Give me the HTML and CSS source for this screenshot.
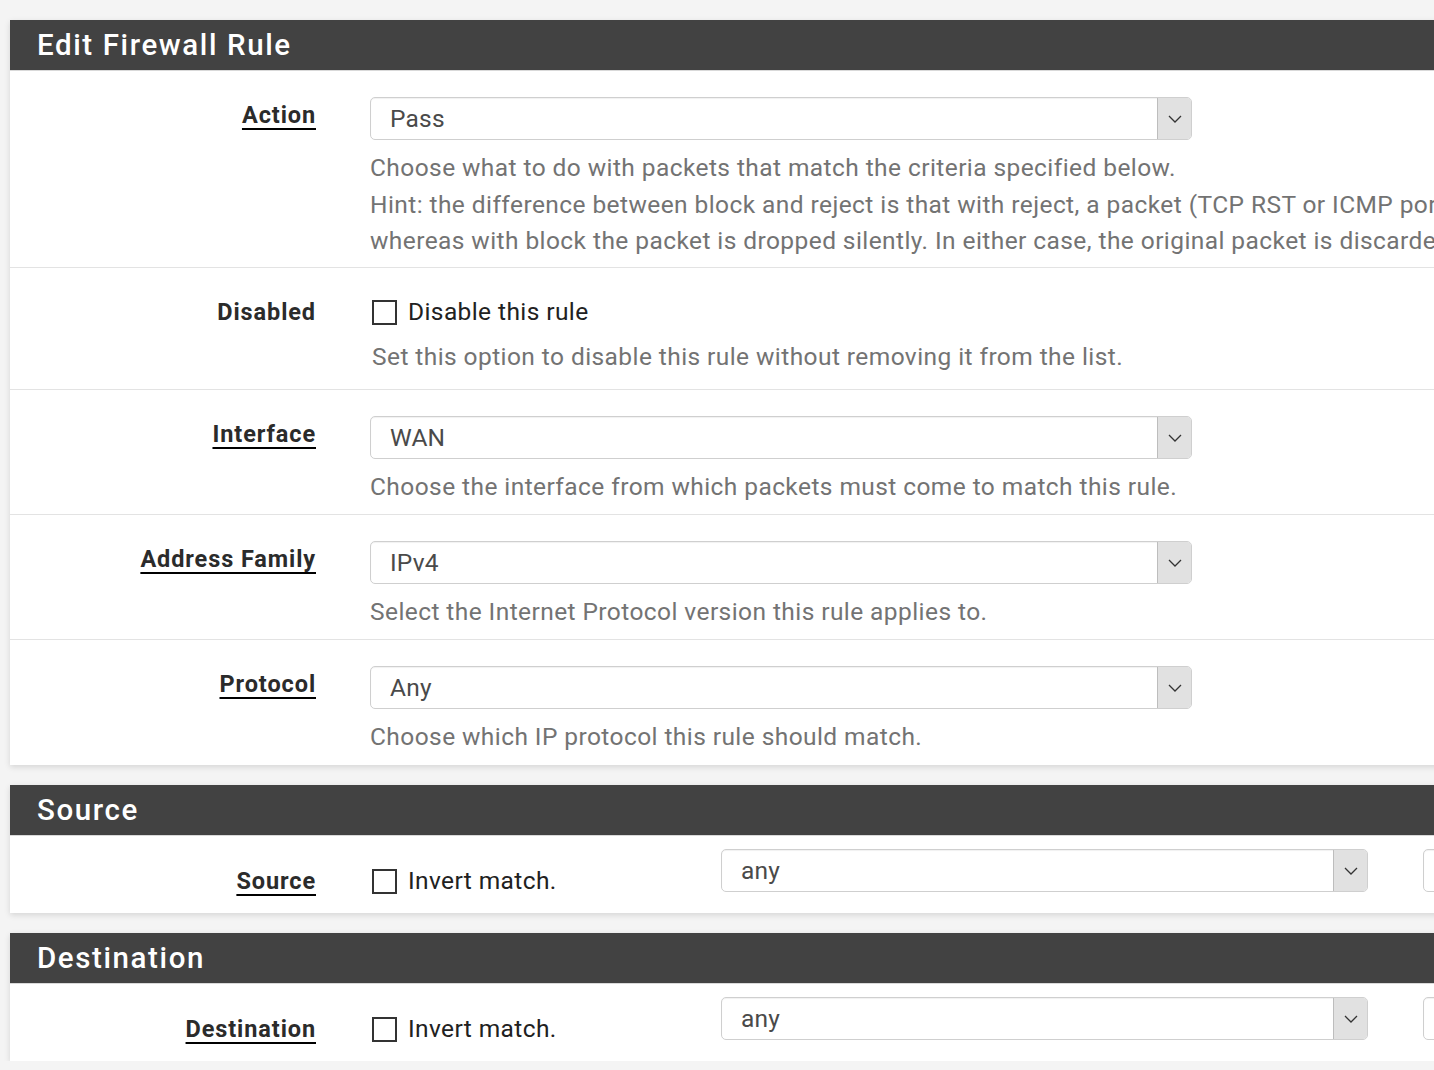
FILE: index.html
```html
<!DOCTYPE html>
<html lang="en">
<head>
<meta charset="utf-8">
<title>Edit Firewall Rule</title>
<link rel="stylesheet" href="styles.css">
</head>
<body>
<div class="page">

  <section class="panel">
    <div class="panel-heading"><h2>Edit Firewall Rule</h2></div>
    <div class="panel-body">

      <div class="row row-action">
        <div class="label"><span class="u">Action</span></div>
        <div class="control">
          <div class="select"><span class="val">Pass</span><span class="caret"><svg width="14" height="8" viewBox="0 0 14 8"><path d="M1 1 L7 7 L13 1" fill="none" stroke="#333" stroke-width="1.3"/></svg></span></div>
          <div class="help">Choose what to do with packets that match the criteria specified below.<br>Hint: the difference between block and reject is that with reject, a packet (TCP RST or ICMP port unreachable for UDP) is returned to the sender,<br>whereas with block the packet is dropped silently. In either case, the original packet is discarded.</div>
        </div>
      </div>

      <div class="row row-check">
        <div class="label"><span>Disabled</span></div>
        <div class="control">
          <label class="check"><span class="box"></span>Disable this rule</label>
          <div class="help help-check">Set this option to disable this rule without removing it from the list.</div>
        </div>
      </div>

      <div class="row">
        <div class="label"><span class="u">Interface</span></div>
        <div class="control">
          <div class="select"><span class="val">WAN</span><span class="caret"><svg width="14" height="8" viewBox="0 0 14 8"><path d="M1 1 L7 7 L13 1" fill="none" stroke="#333" stroke-width="1.3"/></svg></span></div>
          <div class="help">Choose the interface from which packets must come to match this rule.</div>
        </div>
      </div>

      <div class="row">
        <div class="label"><span class="u">Address Family</span></div>
        <div class="control">
          <div class="select"><span class="val">IPv4</span><span class="caret"><svg width="14" height="8" viewBox="0 0 14 8"><path d="M1 1 L7 7 L13 1" fill="none" stroke="#333" stroke-width="1.3"/></svg></span></div>
          <div class="help">Select the Internet Protocol version this rule applies to.</div>
        </div>
      </div>

      <div class="row row-last">
        <div class="label"><span class="u">Protocol</span></div>
        <div class="control">
          <div class="select"><span class="val">Any</span><span class="caret"><svg width="14" height="8" viewBox="0 0 14 8"><path d="M1 1 L7 7 L13 1" fill="none" stroke="#333" stroke-width="1.3"/></svg></span></div>
          <div class="help">Choose which IP protocol this rule should match.</div>
        </div>
      </div>

    </div>
  </section>

  <section class="panel">
    <div class="panel-heading"><h2>Source</h2></div>
    <div class="panel-body">
      <div class="row row-addr">
        <div class="label label-addr"><span class="u">Source</span></div>
        <div class="addr-controls">
          <label class="check check-addr"><span class="box"></span>Invert match.</label>
          <div class="select select-addr"><span class="val">any</span><span class="caret"><svg width="14" height="8" viewBox="0 0 14 8"><path d="M1 1 L7 7 L13 1" fill="none" stroke="#333" stroke-width="1.3"/></svg></span></div>
          <div class="select select-extra"></div>
        </div>
      </div>
    </div>
  </section>

  <section class="panel">
    <div class="panel-heading"><h2>Destination</h2></div>
    <div class="panel-body">
      <div class="row row-addr">
        <div class="label label-addr"><span class="u">Destination</span></div>
        <div class="addr-controls">
          <label class="check check-addr"><span class="box"></span>Invert match.</label>
          <div class="select select-addr"><span class="val">any</span><span class="caret"><svg width="14" height="8" viewBox="0 0 14 8"><path d="M1 1 L7 7 L13 1" fill="none" stroke="#333" stroke-width="1.3"/></svg></span></div>
          <div class="select select-extra"></div>
        </div>
      </div>
    </div>
  </section>

</div>
</body>
</html>
```

FILE: styles.css
```css
html, body {
  margin: 0;
  padding: 0;
  overflow: hidden;
  background: #f4f4f4;
}

body {
  font-family: Roboto, "Liberation Sans", Arial, sans-serif;
  color: #212121;
}

.page {
  padding: 20px 0 0 10px;
  width: 1700px;
  display: flex;
  flex-direction: column;
  gap: 20px;
}

.panel {
  background: #fff;
  box-shadow: 0 2px 6px rgba(0, 0, 0, 0.13);
}

.panel-heading {
  background: #424242;
  height: 51px;
  display: flex;
  align-items: center;
  padding-left: 27px;
  border-bottom: 1px solid #d9d9d9;
  box-sizing: border-box;
}

.panel-heading h2 {
  margin: 0;
  color: #fff;
  font-size: 29.5px;
  font-weight: 500;
  letter-spacing: 1.6px;
}

.row {
  display: grid;
  grid-template-columns: 305px 1fr;
  column-gap: 55px;
  padding: 26px 0 8.5px;
  border-bottom: 1px solid #e3e3e3;
}

.row-action {
  padding-bottom: 7.5px;
}

.row-last {
  border-bottom: none;
  padding-bottom: 9.5px;
}

.label {
  text-align: right;
  font-size: 23.5px;
  font-weight: 700;
  letter-spacing: 0.9px;
  color: #2b2b2b;
  line-height: 36px;
  margin-right: -1px;
}

.u {
  text-decoration: underline;
  text-decoration-thickness: 2px;
  text-underline-offset: 5px;
  text-decoration-color: #000;
}

.select {
  width: 822px;
  height: 43px;
  box-sizing: border-box;
  border: 1px solid #cfcfcf;
  border-radius: 5px;
  display: flex;
  align-items: center;
  justify-content: space-between;
  box-shadow: inset 0 1px 1px rgba(0, 0, 0, 0.06);
  overflow: hidden;
}

.val {
  padding-left: 19px;
  font-size: 24.5px;
  letter-spacing: 0.2px;
  color: #4a4a4a;
}

.caret {
  width: 33px;
  height: 100%;
  background: #e1e1e1;
  border-left: 1px solid #bdbdbd;
  display: flex;
  align-items: center;
  justify-content: center;
}

.help {
  margin-top: 10px;
  font-size: 24.5px;
  letter-spacing: 0.42px;
  line-height: 36.5px;
  color: #737373;
  white-space: nowrap;
}

.row-check {
  padding-top: 26px;
  padding-bottom: 13.5px;
}

.check {
  display: flex;
  align-items: center;
  gap: 11px;
  font-size: 24.5px;
  letter-spacing: 0.4px;
  line-height: 36px;
  color: #212121;
  padding-left: 2px;
}

.box {
  width: 21px;
  height: 21px;
  border: 2px solid #333;
  display: inline-block;
  flex: none;
}

.help-check {
  margin-top: 9px;
  padding-left: 2px;
}

.row-addr {
  padding: 13px 0 14px;
  border-bottom: none;
}

.label-addr {
  padding-top: 14px;
}

.addr-controls {
  display: flex;
  align-items: flex-start;
}

.check-addr {
  width: 351px;
  padding-top: 14px;
  flex: none;
  box-sizing: border-box;
}

.select-addr {
  width: 647px;
  flex: none;
}

.select-extra {
  width: 200px;
  margin-left: 55px;
  flex: none;
}
```
